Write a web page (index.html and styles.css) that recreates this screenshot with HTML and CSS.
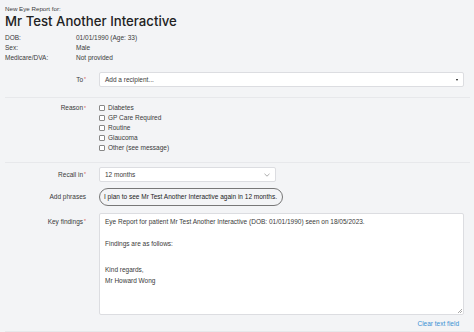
FILE: index.html
```html
<!DOCTYPE html>
<html lang="en">
<head>
<meta charset="utf-8">
<title>New Eye Report</title>
<link rel="stylesheet" href="styles.css">
</head>
<body>
<div class="page">
  <section class="block header">
    <div class="eyebrow">New Eye Report for:</div>
    <h1 class="title">Mr Test Another Interactive</h1>
    <div class="details">
      <div class="dt">DOB:</div><div class="dd">01/01/1990 (Age: 33)</div>
      <div class="dt">Sex:</div><div class="dd">Male</div>
      <div class="dt">Medicare/DVA:</div><div class="dd">Not provided</div>
    </div>
    <div class="row row-to">
      <div class="label">To<span class="req">*</span></div>
      <div class="field">
        <div class="select wide"><span>Add a recipient...</span><span class="caret"></span></div>
      </div>
    </div>
  </section>

  <section class="block reasons">
    <div class="row">
      <div class="label">Reason<span class="req">*</span></div>
      <div class="field checks">
        <label class="check"><span class="box"></span>Diabetes</label>
        <label class="check"><span class="box"></span>GP Care Required</label>
        <label class="check"><span class="box"></span>Routine</label>
        <label class="check"><span class="box"></span>Glaucoma</label>
        <label class="check"><span class="box"></span>Other (see message)</label>
      </div>
    </div>
  </section>

  <section class="block body">
    <div class="row row-recall">
      <div class="label">Recall in<span class="req">*</span></div>
      <div class="field">
        <div class="select narrow"><span>12 months</span>
          <svg class="chev" width="6" height="4" viewBox="0 0 6 4"><path d="M0.5 0.8 L3 3.2 L5.5 0.8" fill="none" stroke="#888" stroke-width="0.7"/></svg>
        </div>
      </div>
    </div>
    <div class="row row-phrase">
      <div class="label">Add phrases</div>
      <div class="field">
        <span class="pill">I plan to see Mr Test Another Interactive again in 12 months.</span>
      </div>
    </div>
    <div class="row row-findings">
      <div class="label">Key findings<span class="req">*</span></div>
      <div class="field">
        <div class="textarea">
          <p class="l1">Eye Report for patient Mr Test Another Interactive (DOB: 01/01/1990) seen on 18/05/2023.</p>
          <p class="l2">Findings are as follows:</p>
          <p class="l3">Kind regards,<br>Mr Howard Wong</p>
          <span class="grip"></span>
        </div>
      </div>
    </div>
    <div class="clear-row"><a class="clear" href="#">Clear text field</a></div>
  </section>
</div>
</body>
</html>
```

FILE: styles.css
```css
html, body {
  margin: 0;
  padding: 0;
  background: #f3f4f6;
}
body {
  font-family: "Liberation Sans", Arial, sans-serif;
  font-size: 6.5px;
  color: #3a3a3a;
}
.page {
  width: 474px;
  height: 332px;
  overflow: hidden;
  box-sizing: border-box;
  padding: 0 4px 0 5px;
}
.block {
  border-bottom: 1px solid #e7e8eb;
}
.header {
  padding: 5px 0 10px 0;
}
.eyebrow {
  line-height: 8px;
  font-size: 6.2px;
}
.title {
  margin: 0;
  font-family: Inter, "Open Sans", sans-serif;
  font-weight: 500;
  font-size: 13.2px;
  line-height: 17px;
  color: #222;
}
.details {
  margin-top: 3px;
  display: grid;
  grid-template-columns: 71px 1fr;
  line-height: 10px;
}
.row {
  display: grid;
  grid-template-columns: 81px 1fr;
  column-gap: 13px;
}
.label {
  text-align: right;
  line-height: 10px;
}
.req {
  color: #d9534f;
  font-size: 5px;
  vertical-align: top;
  margin-left: 1px;
}
.field {
  padding-right: 6px;
}
.row-to {
  margin-top: 9px;
}
.row-to .label,
.row-recall .label {
  line-height: 15px;
}
.select {
  box-sizing: border-box;
  height: 15px;
  background: #fff;
  border: 1px solid #dcdde1;
  border-radius: 2px;
  display: flex;
  align-items: center;
  justify-content: space-between;
  padding: 0 5px;
}
.select.narrow {
  width: 177px;
}
.caret {
  width: 0;
  height: 0;
  border-left: 1.5px solid transparent;
  border-right: 1.5px solid transparent;
  border-top: 2px solid #111;
}
.reasons {
  padding: 5px 0 9px 0;
}
.checks {
  display: flex;
  flex-direction: column;
}
.check {
  display: flex;
  align-items: center;
  line-height: 10px;
}
.box {
  box-sizing: border-box;
  width: 6px;
  height: 6px;
  border: 0.8px solid #888;
  border-radius: 1px;
  background: #fff;
  margin-right: 3px;
}
.body {
  padding: 4px 0 2px 0;
}
.row-phrase {
  margin-top: 6px;
}
.row-phrase .label {
  line-height: 18px;
}
.pill {
  display: inline-block;
  box-sizing: border-box;
  height: 18px;
  line-height: 16px;
  border: 1px solid #777;
  border-radius: 9px;
  padding: 0 5px 0 4px;
  background: #f3f4f6;
  color: #222;
}
.row-findings {
  margin-top: 7px;
}
.row-findings .label {
  padding-top: 3px;
  line-height: 11px;
}
.textarea {
  position: relative;
  box-sizing: border-box;
  height: 102px;
  background: #fff;
  border: 1px solid #dcdde1;
  border-radius: 2px;
  padding: 2px 5px;
  line-height: 11px;
}
.textarea p {
  margin: 0;
}
.textarea .l1 {
  margin-bottom: 11px;
}
.textarea .l2 {
  margin-bottom: 15px;
}
.grip {
  position: absolute;
  right: 1px;
  bottom: 1px;
  width: 4px;
  height: 4px;
  background: linear-gradient(135deg, transparent 45%, #aaa 45%, #aaa 55%, transparent 55%, transparent 75%, #aaa 75%, #aaa 85%, transparent 85%);
}
.clear-row {
  margin-top: 4px;
  text-align: right;
  line-height: 10px;
  padding-right: 11px;
}
.clear {
  color: #3a8fd3;
  text-decoration: none;
}
```
